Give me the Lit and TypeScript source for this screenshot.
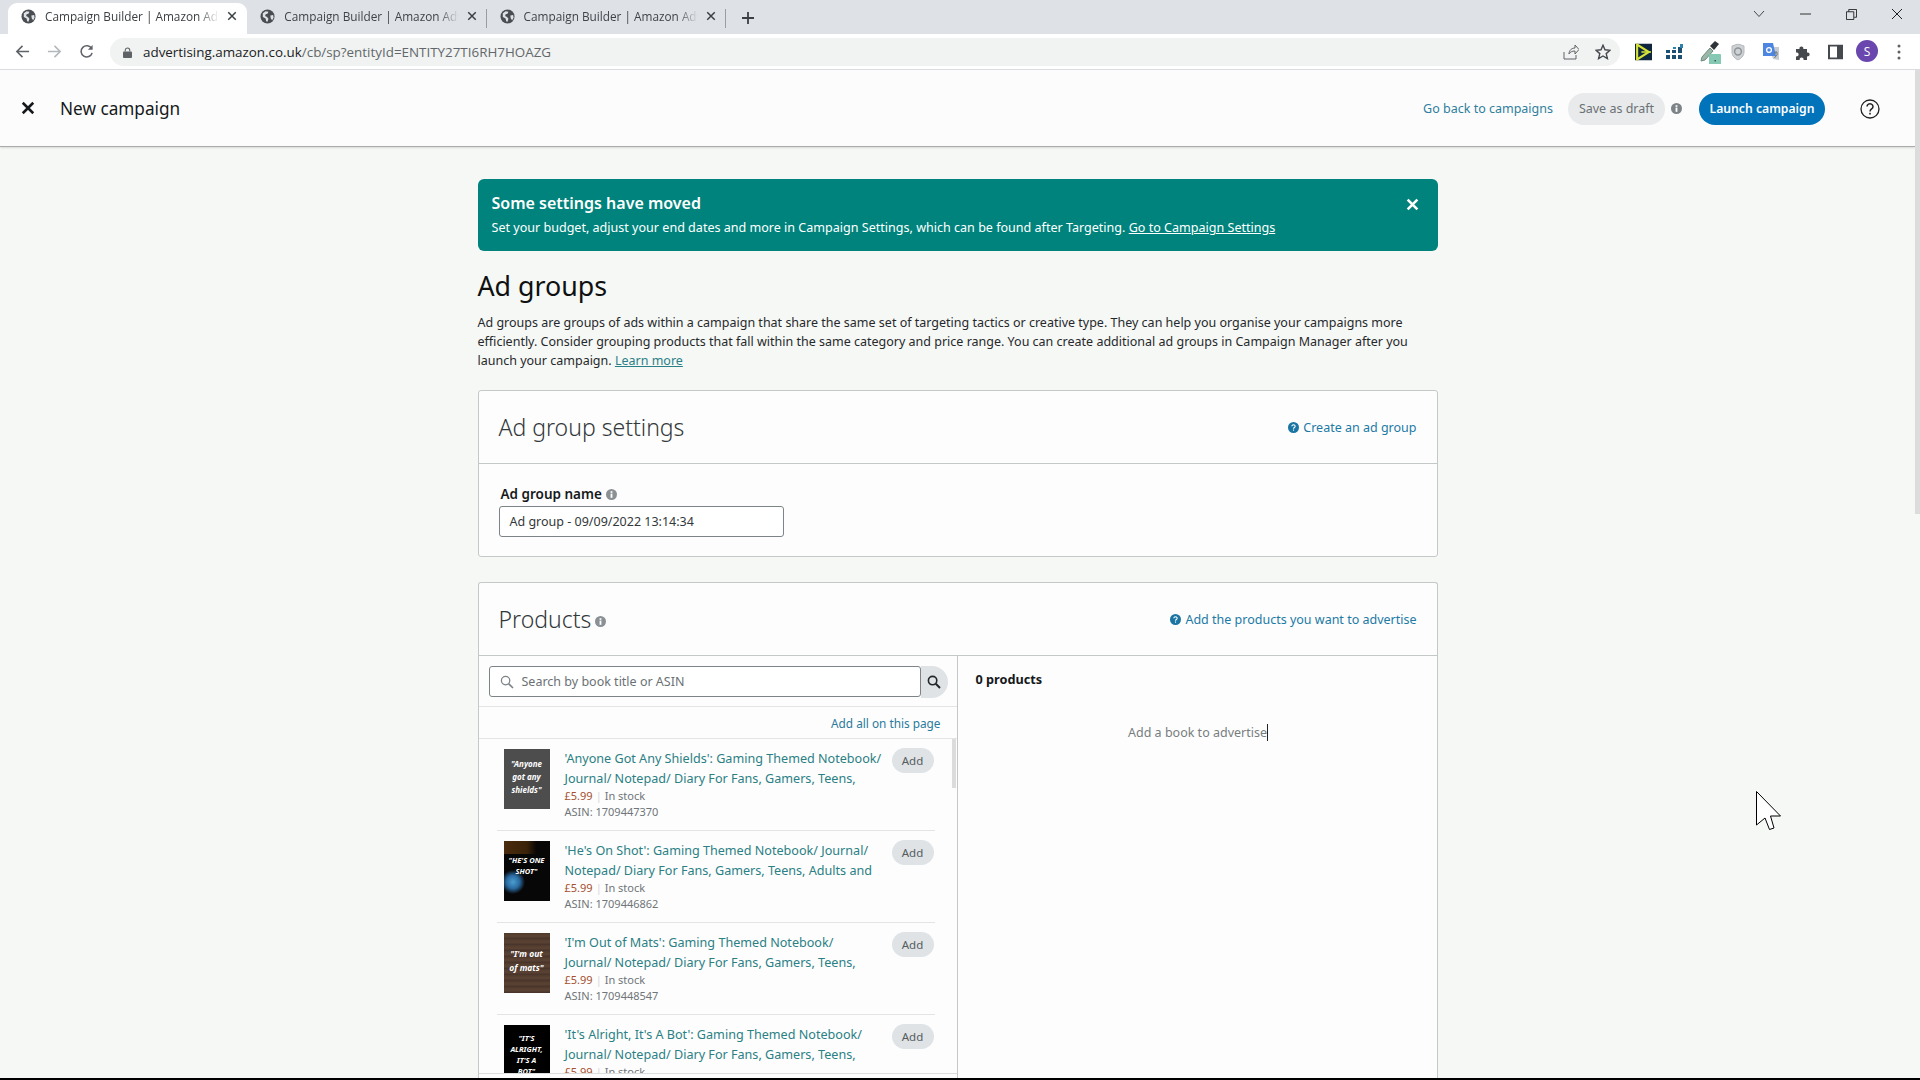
import { LitElement, html, css } from 'lit'
import { customElement } from 'lit/decorators.js'

const products = [
  {
    lines: ["'Anyone Got Any Shields': Gaming Themed Notebook/", 'Journal/ Notepad/ Diary For Fans, Gamers, Teens,'],
    asin: '1709447370',
    cover: 'shields',
    coverText: ['"Anyone', 'got any', 'shields"'],
  },
  {
    lines: ["'He's On Shot': Gaming Themed Notebook/ Journal/", 'Notepad/ Diary For Fans, Gamers, Teens, Adults and'],
    asin: '1709446862',
    cover: 'shot',
    coverText: ['"HE\'S ONE', 'SHOT"'],
  },
  {
    lines: ["'I'm Out of Mats': Gaming Themed Notebook/", 'Journal/ Notepad/ Diary For Fans, Gamers, Teens,'],
    asin: '1709448547',
    cover: 'mats',
    coverText: ['"I\'m out', 'of mats"'],
  },
  {
    lines: ["'It's Alright, It's A Bot': Gaming Themed Notebook/", 'Journal/ Notepad/ Diary For Fans, Gamers, Teens,'],
    asin: '1709447001',
    cover: 'bot',
    coverText: ['"IT\'S', 'ALRIGHT,', 'IT\'S A', 'BOT"'],
  },
]

const globe = html`<svg class="favicon" viewBox="0 0 16 16" width="15" height="15">
  <circle cx="8" cy="8" r="7.5" fill="#4a4d52" />
  <path d="M3 4.5l3-2 3 .5-1 2-2 .5-.5 2 2 1 1.5 2-1 3-1.5-.5-.5-3-3-1.5zM11 7l3-.5.5 2.5-1.5 3-1.5-2z" fill="#dee1e6" />
</svg>`

const closeX = (size: number, weight: number, color: string) => html`<svg viewBox="0 0 12 12" width=${size} height=${size}>
  <path d="M1.5 1.5l9 9M10.5 1.5l-9 9" stroke=${color} stroke-width=${weight} fill="none" />
</svg>`

const infoIcon = (size: number, color = '#7d8488') => html`<svg viewBox="0 0 12 12" width=${size} height=${size}>
  <circle cx="6" cy="6" r="6" fill=${color} />
  <rect x="5" y="5" width="2" height="4.6" fill="#fff" />
  <rect x="5" y="2.4" width="2" height="1.8" fill="#fff" />
</svg>`

const helpDot = html`<svg viewBox="0 0 12 12" width="11" height="11">
  <circle cx="6" cy="6" r="6" fill="#1a75a3" />
  <path d="M4.2 4.6a1.8 1.6 0 1 1 2.7 1.4c-.6.4-.9.7-.9 1.3" stroke="#fff" stroke-width="1.2" fill="none" />
  <rect x="5.4" y="8.2" width="1.2" height="1.3" fill="#fff" />
</svg>`

const magnifier = (color: string, weight: number) => html`<svg viewBox="0 0 14 14" width="14" height="14">
  <circle cx="5.6" cy="5.6" r="4.2" stroke=${color} stroke-width=${weight} fill="none" />
  <path d="M8.8 8.8l4.2 4.2" stroke=${color} stroke-width=${weight + 0.4} fill="none" />
</svg>`

const toolbarIcons = html`
  <svg class="tool" style="left:1635px" viewBox="0 0 16 16" width="17" height="17">
    <rect width="16" height="16" fill="#10263f" />
    <path d="M2 1v14l11-7z" fill="none" stroke="#d6e33a" stroke-width="2" />
    <path d="M6 8h9" stroke="#d6e33a" stroke-width="1.6" />
  </svg>
  <svg class="tool" style="left:1666px" viewBox="0 0 18 16" width="18" height="16">
    <path d="M0 6h4v3H0zM0 11h4v4H0zM6 6h4v3H6zM6 11h4v4H6zM12 3h4v6h-4zM12 11h4v4h-4z" fill="#1c4f72" />
    <path d="M14 0h3v4h-3zM7 3h3v2H7z" fill="#2b83ad" />
  </svg>
  <svg class="tool" style="left:1699px" viewBox="0 0 22 24" width="22" height="24">
    <path d="M3 17L11 8l3 3-8 9-4 1z" fill="#9ab7a8" stroke="#6f8a80" />
    <path d="M11 6l5-5 4 3-5 6z" fill="#2f3438" />
    <rect x="10" y="14" width="12" height="11" rx="1" fill="#86c9b3" />
    <rect x="15.5" y="20" width="1.4" height="1.4" fill="#345" />
  </svg>
  <svg class="tool" style="left:1731px" viewBox="0 0 14 17" width="14" height="17">
    <path d="M7 .5l6 2v6c0 4-3 6.5-6 8-3-1.5-6-4-6-8v-6z" fill="#cfd2d4" stroke="#b4b8ba" />
    <circle cx="7" cy="8" r="3.4" fill="none" stroke="#8d9398" stroke-width="1.5" />
  </svg>
  <svg class="tool" style="left:1762px" viewBox="0 0 18 18" width="18" height="18">
    <path d="M7 4h10v13l-6-1z" fill="#c5cbd0" />
    <path d="M1 0h10l3 13H1z" fill="#4d86e0" />
    <circle cx="7" cy="7" r="2.4" fill="none" stroke="#fff" stroke-width="1.3" />
    <path d="M12 10h4M14 8v2M12.5 15l3-4" stroke="#6d7478" stroke-width="1" />
  </svg>
  <svg class="tool" style="left:1795px" viewBox="0 0 16 16" width="16" height="16">
    <path d="M1 5h3.5a2 2 0 1 1 3.8 0H12v3.5a2 2 0 1 1 0 3.8V16H8.5a2 2 0 1 0-3.8 0H1v-3.7a2 2 0 1 0 0-3.8z" fill="#45484c" />
  </svg>
  <svg class="tool" style="left:1828px" viewBox="0 0 15 15" width="15" height="15">
    <rect x="1" y="1" width="13" height="13" fill="#fff" stroke="#45484c" stroke-width="2" />
    <rect x="9" y="1" width="5" height="13" fill="#45484c" />
  </svg>
`

@customElement('app-root')
export class AppRoot extends LitElement {
  static styles = css`
    :host {
      display: block;
      font-family: 'Noto Sans', 'Liberation Sans', sans-serif;
      color: #16191b;
    }
    a {
      color: inherit;
      text-decoration: none;
    }
    .screen {
      position: relative;
      height: 1080px;
      overflow: hidden;
      display: flex;
      flex-direction: column;
      background: #f6f8f6;
    }
    .tabstrip {
      height: 34px;
      background: #dee1e6;
      display: flex;
      align-items: flex-end;
      padding-left: 8px;
      flex: none;
    }
    .tab {
      width: 239.3px;
      height: 31px;
      box-sizing: border-box;
      display: flex;
      align-items: center;
      padding: 0 10px 5px 13px;
      font-family: 'Open Sans', sans-serif;
      font-size: 11.8px;
      color: #40444a;
      position: relative;
    }
    .tab.active {
      background: #fff;
      border-radius: 9px 9px 0 0;
      color: #3c4043;
    }
    .tab.sep::after {
      content: '';
      position: absolute;
      right: 0;
      top: 6px;
      height: 19px;
      width: 1px;
      background: #9a9da3;
    }
    .favicon {
      flex: none;
      margin-right: 9px;
    }
    .tab-title {
      flex: 1;
      white-space: nowrap;
      overflow: hidden;
      -webkit-mask-image: linear-gradient(90deg, #000 88%, transparent 100%);
      mask-image: linear-gradient(90deg, #000 88%, transparent 100%);
    }
    .tab svg:last-child {
      flex: none;
      margin-left: 8px;
    }
    .newtab {
      margin: 0 0 9px 15px;
      display: flex;
    }
    .winctl {
      margin-left: auto;
      height: 28px;
      align-self: flex-start;
      display: grid;
      grid-template-columns: repeat(4, 46px);
      justify-items: center;
      align-items: center;
      width: 184px;
    }
    .toolbar {
      height: 36px;
      background: #fff;
      flex: none;
      position: relative;
      display: flex;
      align-items: center;
      padding-left: 15px;
      border-bottom: 1px solid #dadce0;
      box-sizing: border-box;
    }
    .nav {
      width: 32px;
      display: flex;
    }
    .urlbar {
      position: absolute;
      left: 110px;
      top: 4px;
      width: 1510px;
      height: 28px;
      background: #f0f3f1;
      border-radius: 14px;
      display: flex;
      align-items: center;
      padding-left: 13px;
      box-sizing: border-box;
      font-family: 'Open Sans', sans-serif;
      font-size: 13.4px;
      color: #63676b;
    }
    .urlbar b {
      font-weight: 400;
      color: #202124;
    }
    .urlbar .lock {
      margin-right: 11px;
    }
    .urlbar .right {
      margin-left: auto;
      display: flex;
      gap: 16px;
      align-items: center;
      padding-right: 9px;
    }
    .tool {
      position: absolute;
      top: 50%;
      transform: translateY(-50%);
    }
    .avatar {
      position: absolute;
      left: 1856px;
      top: 6px;
      width: 22px;
      height: 22px;
      border-radius: 50%;
      background: #6a47ae;
      color: #fff;
      font: 12px 'Open Sans', sans-serif;
      display: flex;
      align-items: center;
      justify-content: center;
    }
    .kebab {
      position: absolute;
      left: 1897px;
      top: 10px;
    }
    .header {
      flex: none;
      height: 77px;
      box-sizing: border-box;
      background: #fcfcfc;
      border-bottom: 1px solid #a9abab;
      box-shadow: 0 1px 2px rgba(0, 0, 0, 0.12);
      display: flex;
      align-items: center;
      padding: 0 35px 0 21px;
      margin-right: 5px;
    }
    .header h2 {
      font-size: 17.2px;
      font-weight: 400;
      margin: 0 0 0 25px;
      color: #16191b;
    }
    .header-actions {
      margin-left: auto;
      display: flex;
      align-items: center;
      font-size: 12.5px;
      padding-top: 1px;
    }
    .back-link {
      color: #2f7f9d;
      margin-right: 15px;
    }
    .pill {
      height: 32px;
      border-radius: 16px;
      display: flex;
      align-items: center;
      justify-content: center;
      box-sizing: border-box;
    }
    .draft {
      width: 97px;
      background: #e8eaec;
      color: #6b7175;
    }
    .draft-info {
      margin: 0 17px 0 6px;
      display: flex;
    }
    .launch {
      width: 126px;
      background: #0073bb;
      color: #fff;
      font-weight: 600;
      font-size: 12.2px;
    }
    .help {
      margin-left: 35px;
      display: flex;
    }
    .page {
      flex: 1;
      min-height: 0;
      display: flex;
      position: relative;
    }
    .scroll {
      position: absolute;
      right: 0;
      top: -77px;
      width: 5px;
      height: 444px;
      background: #dcdcdc;
    }
    .column {
      width: 960px;
      margin: 0 auto;
      padding: 32px 5px 0 0;
      display: flex;
      flex-direction: column;
      min-height: 0;
      box-sizing: content-box;
    }
    .banner {
      flex: none;
      height: 72px;
      box-sizing: border-box;
      background: #00837c;
      border-radius: 6px;
      color: #fff;
      padding: 13px 14px;
      position: relative;
      font-size: 12.55px;
    }
    .banner strong {
      display: block;
      font-size: 16px;
      font-weight: 600;
      line-height: 22px;
      margin-bottom: 5px;
    }
    .banner a {
      text-decoration: underline;
    }
    .banner-close {
      position: absolute;
      right: 19px;
      top: 19px;
      display: flex;
    }
    h1 {
      font-size: 26.8px;
      font-weight: 400;
      line-height: 36px;
      margin: 17px 0 9px;
      color: #0f1111;
    }
    .intro {
      margin: 0;
      font-size: 12.5px;
      line-height: 19px;
      color: #26292b;
    }
    .intro a {
      color: #2b7f87;
      text-decoration: underline;
    }
    .card {
      background: #fdfdfd;
      border: 1px solid #c5c8c8;
      border-radius: 3px;
    }
    .settings {
      flex: none;
      margin-top: 20px;
      height: 167px;
      box-sizing: border-box;
    }
    .products {
      flex: 1;
      min-height: 0;
      margin-top: 25px;
      display: flex;
      flex-direction: column;
      border-bottom: none;
      border-radius: 3px 3px 0 0;
    }
    .card-head {
      flex: none;
      height: 73px;
      box-sizing: border-box;
      border-bottom: 1px solid #c5c8c8;
      display: flex;
      align-items: center;
      justify-content: space-between;
      padding: 0 20px;
    }
    .card-head h3 {
      font-size: 23px;
      font-weight: 300;
      margin: 0;
      color: #33383b;
      display: flex;
      align-items: center;
      gap: 4px;
    }
    .card-head h3 svg {
      margin-top: 4px;
    }
    .hint {
      color: #1c7aa5;
      font-size: 12.5px;
      display: flex;
      align-items: center;
      gap: 4px;
    }
    .settings-body {
      padding: 21px 20px 0;
    }
    .field-label {
      font-size: 13.5px;
      font-weight: 600;
      color: #16191b;
      padding-left: 2px;
      display: flex;
      align-items: center;
      gap: 4px;
      height: 18px;
      margin-bottom: 3px;
    }
    .field {
      width: 285px;
      height: 31px;
      box-sizing: border-box;
      border: 1px solid #7d8488;
      border-radius: 3px;
      background: #fff;
      padding: 0 10px;
      display: flex;
      align-items: center;
      font-size: 12.5px;
      color: #33383b;
    }
    .split {
      flex: 1;
      min-height: 0;
      display: flex;
    }
    .left {
      width: 479px;
      flex: none;
      box-sizing: border-box;
      border-right: 1px solid #c5c8c8;
      display: flex;
      flex-direction: column;
      min-height: 0;
      position: relative;
    }
    .search-row {
      flex: none;
      height: 51px;
      box-sizing: border-box;
      padding: 10px 0 0 10px;
      border-bottom: 1px solid #e3e5e5;
      display: flex;
      align-items: flex-start;
    }
    .search {
      width: 432px;
      height: 31px;
      box-sizing: border-box;
      border: 1px solid #7d8488;
      border-radius: 3px;
      background: #fff;
      display: flex;
      align-items: center;
      padding-left: 10px;
      gap: 8px;
      font-size: 12.5px;
      color: #6b7175;
      position: relative;
      z-index: 1;
    }
    .search-btn {
      width: 27px;
      height: 32px;
      background: #dfe3e6;
      border-radius: 0 16px 16px 0;
      display: flex;
      align-items: center;
      justify-content: center;
    }
    .add-all {
      flex: none;
      height: 32px;
      box-sizing: border-box;
      border-bottom: 1px solid #e3e5e5;
      display: flex;
      align-items: center;
      justify-content: flex-end;
      padding: 1px 16px 0 0;
      font-size: 11.8px;
      color: #2a7a9c;
    }
    .list {
      flex: none;
      height: 335px;
      overflow: hidden;
      position: relative;
      border-bottom: 1px solid #dcdede;
      box-sizing: border-box;
    }
    .thumb {
      position: absolute;
      right: 1px;
      top: 0;
      width: 4px;
      height: 49px;
      background: #dcdcdc;
    }
    .item {
      height: 92px;
      box-sizing: border-box;
      margin: 0 22px 0 18px;
      border-bottom: 1px solid #e3e5e5;
      padding: 10px 1px 0 7px;
      display: flex;
    }
    .cover {
      width: 46px;
      height: 60px;
      flex: none;
      margin-right: 15px;
      display: flex;
      flex-direction: column;
      align-items: center;
      box-sizing: border-box;
      font-size: 8px;
      font-style: italic;
      font-weight: 700;
      color: #fff;
      white-space: nowrap;
      overflow: hidden;
    }
    .cover.shields {
      background: #4d4d4d;
      padding-top: 8px;
      line-height: 13px;
    }
    .cover.shot {
      background:
        radial-gradient(ellipse 12px 12px at 9px 41px, #4b9fd0 0, #2a6aa0 55%, transparent 100%),
        linear-gradient(90deg, #4a2c0e 0, #3a2208 50%, #090606 70%) 0 0 / 100% 13px no-repeat,
        #070707;
      padding-top: 14px;
      line-height: 11px;
      font-size: 7.5px;
    }
    .cover.mats {
      background: repeating-linear-gradient(180deg, #4e392b 0, #5b4334 3px, #46322a 6px);
      padding-top: 14px;
      line-height: 14px;
      font-size: 8.5px;
    }
    .cover.bot {
      background: #000;
      padding-top: 8px;
      line-height: 11px;
      font-size: 7.5px;
    }
    .info {
      flex: 1;
      min-width: 0;
    }
    .title {
      font-size: 12.6px;
      line-height: 19.5px;
      color: #2a8084;
      white-space: nowrap;
    }
    .meta {
      font-size: 11px;
      line-height: 16px;
      color: #6f7579;
      white-space: nowrap;
    }
    .price {
      color: #a5502e;
    }
    .bar {
      color: #d6d8d9;
      margin: 0 3px;
    }
    .add {
      width: 42px;
      height: 25px;
      flex: none;
      border-radius: 13px;
      background: #dfe3e6;
      color: #565c60;
      font-size: 11.5px;
      display: flex;
      align-items: center;
      justify-content: center;
      margin-top: -1px;
    }
    .right-col {
      flex: 1;
      padding: 14px 17px 0 18px;
      min-width: 0;
    }
    .count {
      font-size: 12.7px;
      font-weight: 700;
      color: #16191b;
      line-height: 18px;
    }
    .empty {
      margin-top: 36px;
      margin-left: 1px;
      text-align: center;
      font-size: 12.5px;
      color: #787d80;
      line-height: 18px;
    }
    .empty span {
      border-right: 1px solid #222;
    }
    .blackbar {
      flex: none;
      height: 2px;
      background: #000;
    }
    .cursor {
      position: absolute;
      left: 1756px;
      top: 791px;
    }
  `

  private renderTab(active: boolean, sep: boolean) {
    const cls = `tab${active ? ' active' : ''}${sep ? ' sep' : ''}`
    return html`<div class=${cls}>
      ${globe}
      <span class="tab-title">Campaign Builder | Amazon Advertising</span>
      ${closeX(10, 1.8, '#3c4043')}
    </div>`
  }

  private renderProduct(p: (typeof products)[number]) {
    return html`<div class="item">
      <div class="cover ${p.cover}">${p.coverText.map(t => html`<span>${t}</span>`)}</div>
      <div class="info">
        <div class="title">${p.lines[0]}<br />${p.lines[1]}</div>
        <div class="meta"><span class="price">£5.99</span><span class="bar">|</span>In stock</div>
        <div class="meta">ASIN: ${p.asin}</div>
      </div>
      <div class="add">Add</div>
    </div>`
  }

  render() {
    return html`<div class="screen">
      <div class="tabstrip">
        ${this.renderTab(true, false)} ${this.renderTab(false, true)} ${this.renderTab(false, true)}
        <div class="newtab">
          <svg viewBox="0 0 14 14" width="14" height="14"><path d="M7 1v12M1 7h12" stroke="#3c4043" stroke-width="1.8" /></svg>
        </div>
        <div class="winctl">
          <svg viewBox="0 0 12 8" width="12" height="8"><path d="M1 1l5 5.5L11 1" stroke="#45484c" fill="none" /></svg>
          <svg viewBox="0 0 12 2" width="11" height="2"><path d="M0 1h12" stroke="#222" /></svg>
          <svg viewBox="0 0 12 12" width="11" height="11"><path d="M.5 3h8v8.5h-8zM3 3V.5h8.5V9H9" stroke="#222" fill="none" /></svg>
          <svg viewBox="0 0 12 12" width="12" height="12"><path d="M1 1l10 10M11 1L1 11" stroke="#222" fill="none" /></svg>
        </div>
      </div>

      <div class="toolbar">
        <div class="nav">
          <svg viewBox="0 0 16 16" width="15" height="15"><path d="M15 8H2M8 2L2 8l6 6" stroke="#5f6368" stroke-width="1.7" fill="none" /></svg>
        </div>
        <div class="nav">
          <svg viewBox="0 0 16 16" width="15" height="15"><path d="M1 8h13M8 2l6 6-6 6" stroke="#b5b8bb" stroke-width="1.7" fill="none" /></svg>
        </div>
        <div class="nav">
          <svg viewBox="0 0 16 16" width="15" height="15"><path d="M13.5 5A6 6 0 1 0 14 9.5" stroke="#5f6368" stroke-width="1.7" fill="none" /><path d="M14.5 1v5h-5z" fill="#5f6368" /></svg>
        </div>
        <div class="urlbar">
          <svg class="lock" viewBox="0 0 10 12" width="9" height="11"><rect y="5" width="10" height="7" rx="1" fill="#5f6368" /><path d="M2.5 5V3.5a2.5 2.5 0 0 1 5 0V5" stroke="#5f6368" stroke-width="1.2" fill="none" /></svg>
          <span><b>advertising.amazon.co.uk</b>/cb/sp?entityId=ENTITY27TI6RH7HOAZG</span>
          <div class="right">
            <svg viewBox="0 0 16 16" width="16" height="16"><path d="M1 8v7h12v-4M6 10c0-4 3-6 6-6V1l4 4.5L12 10V7c-3 0-5 1-6 3z" stroke="#5f6368" fill="none" /></svg>
            <svg viewBox="0 0 16 16" width="16" height="16"><path d="M8 1.2l2 4.6 5 .5-3.8 3.3 1.2 5L8 12l-4.4 2.6 1.2-5L1 6.300l5-.5z" stroke="#45484c" stroke-width="1.4" fill="none" /></svg>
          </div>
        </div>
        ${toolbarIcons}
        <div class="avatar">S</div>
        <svg class="kebab" viewBox="0 0 4 16" width="4" height="16"><circle cx="2" cy="2" r="1.5" fill="#5f6368" /><circle cx="2" cy="8" r="1.5" fill="#5f6368" /><circle cx="2" cy="14" r="1.5" fill="#5f6368" /></svg>
      </div>

      <div class="header">
        ${closeX(14, 2.2, '#16191b')}
        <h2>New campaign</h2>
        <div class="header-actions">
          <a class="back-link">Go back to campaigns</a>
          <div class="pill draft">Save as draft</div>
          <span class="draft-info">${infoIcon(11)}</span>
          <div class="pill launch">Launch campaign</div>
          <span class="help">
            <svg viewBox="0 0 20 20" width="20" height="20">
              <circle cx="10" cy="10" r="9" stroke="#222" stroke-width="1.3" fill="none" />
              <path d="M7 7.5a3 2.8 0 1 1 4.6 2.4c-1 .7-1.6 1.2-1.6 2.5" stroke="#222" stroke-width="1.5" fill="none" />
              <rect x="9.2" y="13.8" width="1.6" height="1.7" fill="#222" />
            </svg>
          </span>
        </div>
      </div>

      <div class="page">
        <div class="scroll"></div>
        <div class="column">
          <div class="banner">
            <strong>Some settings have moved</strong>
            Set your budget, adjust your end dates and more in Campaign Settings, which can be found after Targeting.
            <a>Go to Campaign Settings</a>
            <span class="banner-close">${closeX(13, 2.4, '#fff')}</span>
          </div>

          <h1>Ad groups</h1>
          <p class="intro">
            Ad groups are groups of ads within a campaign that share the same set of targeting tactics or creative type. They can help you organise your campaigns more efficiently. Consider grouping products that fall within the same category and price range. You can create additional ad groups in Campaign Manager after you launch your campaign.
            <a>Learn more</a>
          </p>

          <section class="card settings">
            <div class="card-head">
              <h3>Ad group settings</h3>
              <a class="hint">${helpDot} Create an ad group</a>
            </div>
            <div class="settings-body">
              <div class="field-label">Ad group name ${infoIcon(11, '#8a9094')}</div>
              <div class="field">Ad group - 09/09/2022 13:14:34</div>
            </div>
          </section>

          <section class="card products">
            <div class="card-head">
              <h3>Products ${infoIcon(11, '#8a9094')}</h3>
              <a class="hint">${helpDot} Add the products you want to advertise</a>
            </div>
            <div class="split">
              <div class="left">
                <div class="search-row">
                  <div class="search">${magnifier('#7d8488', 1.3)} Search by book title or ASIN</div>
                  <div class="search-btn">${magnifier('#22272a', 1.6)}</div>
                </div>
                <div class="add-all"><a>Add all on this page</a></div>
                <div class="list">
                  ${products.map(p => this.renderProduct(p))}
                  <div class="thumb"></div>
                </div>
              </div>
              <div class="right-col">
                <div class="count">0 products</div>
                <div class="empty"><span>Add a book to advertise</span></div>
              </div>
            </div>
          </section>
        </div>
      </div>
      <div class="blackbar"></div>

      <svg class="cursor" viewBox="0 0 25 39" width="25" height="39">
        <path d="M.5 .5L24.5 25H14.5L18 37l-4.5 1.5L9 27 .5 34z" fill="#fff" stroke="#000" stroke-width="1" />
      </svg>
    </div>`
  }
}

declare global {
  interface HTMLElementTagNameMap {
    'app-root': AppRoot
  }
}
